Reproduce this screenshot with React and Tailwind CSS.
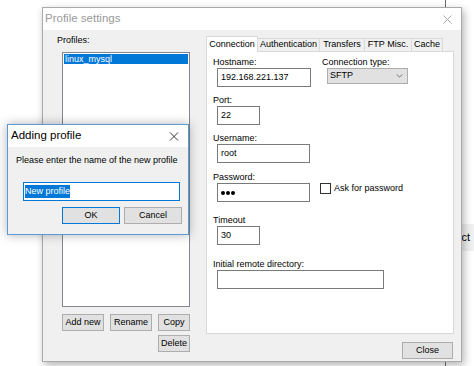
function CloseX({ className }) {
  return (
    <svg viewBox="0 0 10 10" className={className} fill="none" stroke="currentColor" strokeWidth="1">
      <path d="M0.5 0.5L9.5 9.5M9.5 0.5L0.5 9.5" />
    </svg>
  );
}

function Btn({ children, className = '' }) {
  return (
    <div className={`flex items-center justify-center h-[17px] bg-[#e1e1e1] border text-[9px] text-black ${className}`}>
      {children}
    </div>
  );
}

function Label({ children }) {
  return <div className="h-[11px] leading-[11px] text-[9px] text-black whitespace-nowrap">{children}</div>;
}

function TextBox({ width, children }) {
  return (
    <div className={`ml-[4px] h-[19px] ${width} border border-[#7a7a7a] bg-white flex items-center pl-[3px] text-[9px] text-black`}>
      {children}
    </div>
  );
}

const TABS = [
  { name: 'Authentication', w: 'w-[62px]' },
  { name: 'Transfers', w: 'w-[45px]' },
  { name: 'FTP Misc.', w: 'w-[47px]' },
  { name: 'Cache', w: 'w-[31px]' },
];

export default function App() {
  return (
    <div className="relative w-[474px] h-[366px] overflow-hidden bg-white font-['Liberation_Sans',Arial,sans-serif]">
      {/* window behind */}
      <div className="absolute left-[445px] top-0 w-[60px] h-[366px] border-l border-[#6b6b6b] bg-white">
        <div className="absolute left-[-20px] top-[224px] w-[80px] h-[27px] bg-[#f0f0f0] flex items-center pl-[3px] text-[11px] text-black">
          Connect
        </div>
      </div>

      {/* Profile settings */}
      <div className="absolute left-[42px] top-[7px] w-[420px] h-[355px] border border-[#aaaaaa] bg-[#f0f0f0] shadow-[2px_3px_8px_rgba(0,0,0,0.3)] flex flex-col">
        <div className="h-[22px] bg-white flex items-center justify-between pl-[2px] pr-[9px]">
          <span className="text-[11.5px] text-[#9a9a9a]">Profile settings</span>
          <CloseX className="w-[9px] h-[9px] text-[#a0a0a0]" />
        </div>

        <div className="flex-1 flex pl-[14px] pr-[6px]">
          <div className="w-[133px] pt-[4px]">
            <div className="h-[12px] leading-[12px] text-[9px] text-black">Profiles:</div>
            <div className="mt-[6px] ml-[5px] w-[128px] h-[255px] border border-[#828790] bg-white p-px">
              <div className="h-[10px] leading-[10px] bg-[#0078d7] text-white text-[9px] pl-[1px]">linux_mysql</div>
            </div>
            <div className="mt-[7px] ml-[5px] flex gap-[6px]">
              <Btn className="w-[42px] border-[#adadad]">Add new</Btn>
              <Btn className="w-[42px] border-[#adadad]">Rename</Btn>
              <Btn className="w-[32px] border-[#adadad]">Copy</Btn>
            </div>
            <div className="mt-[4px] flex justify-end">
              <Btn className="w-[32px] border-[#adadad]">Delete</Btn>
            </div>
          </div>

          <div className="ml-[16px] w-[248px] pt-[6px] flex flex-col">
            <div className="flex items-end h-[15px]">
              <div className="relative z-10 -mb-px h-[16px] w-[52px] bg-white border border-b-0 border-[#d9d9d9] flex items-center justify-center text-[9px] text-black">
                Connection
              </div>
              {TABS.map((t) => (
                <div
                  key={t.name}
                  className={`h-[13px] ${t.w} bg-[#f0f0f0] border-t border-r border-[#d9d9d9] flex items-center justify-center text-[9px] text-black`}
                >
                  {t.name}
                </div>
              ))}
            </div>

            <div className="h-[283px] bg-white border border-[#d9d9d9] pt-[5px] pl-[6px] flex flex-col">
              <div className="flex">
                <div className="w-[98px]">
                  <Label>Hostname:</Label>
                  <TextBox width="w-[94px]">192.168.221.137</TextBox>
                </div>
                <div className="ml-[11px]">
                  <Label>Connection type:</Label>
                  <div className="ml-[5px] w-[81px] h-[16px] bg-[#e1e1e1] border border-[#adadad] flex items-center justify-between pl-[2px] pr-[4px] text-[9px] text-black">
                    <span>SFTP</span>
                    <svg viewBox="0 0 8 5" className="w-[7px] h-[4px] text-[#555]" fill="none" stroke="currentColor" strokeWidth="1">
                      <path d="M0.5 0.5L4 4L7.5 0.5" />
                    </svg>
                  </div>
                </div>
              </div>

              <div className="mt-[8px]">
                <Label>Port:</Label>
                <TextBox width="w-[43px]">22</TextBox>
              </div>

              <div className="mt-[8px]">
                <Label>Username:</Label>
                <TextBox width="w-[93px]">root</TextBox>
              </div>

              <div className="mt-[9px]">
                <Label>Password:</Label>
                <div className="flex items-start">
                  <TextBox width="w-[93px]">
                    <div className="flex gap-[1px]">
                      <span className="w-[4px] h-[4px] rounded-full bg-black" />
                      <span className="w-[4px] h-[4px] rounded-full bg-black" />
                      <span className="w-[4px] h-[4px] rounded-full bg-black" />
                    </div>
                  </TextBox>
                  <div className="ml-[10px] flex items-center h-[11px]">
                    <div className="w-[11px] h-[11px] border border-[#333] bg-white" />
                    <span className="ml-[3px] text-[9px] text-black">Ask for password</span>
                  </div>
                </div>
              </div>

              <div className="mt-[13px]">
                <Label>Timeout</Label>
                <TextBox width="w-[43px]">30</TextBox>
              </div>

              <div className="mt-[14px]">
                <Label>Initial remote directory:</Label>
                <TextBox width="w-[167px]" />
              </div>
            </div>

            <div className="mt-[8px] flex justify-end pr-[1px]">
              <Btn className="w-[51px] border-[#adadad]">Close</Btn>
            </div>
          </div>
        </div>
      </div>

      {/* Adding profile */}
      <div className="absolute left-[7px] top-[124px] w-[182px] h-[111px] border border-[#5b9bd5] bg-[#f0f0f0] shadow-[0_0_10px_rgba(0,0,0,0.3)] flex flex-col">
        <div className="h-[22px] bg-white flex items-center justify-between pl-[3px] pr-[9px]">
          <span className="text-[11.5px] text-black">Adding profile</span>
          <CloseX className="w-[10px] h-[9px] text-[#222]" />
        </div>
        <div className="pl-[8px] pt-[8px]">
          <Label>Please enter the name of the new profile</Label>
          <div className="mt-[16px] ml-[7px] w-[157px] h-[19px] border border-[#0078d7] bg-white flex items-center pl-[1px]">
            <span className="h-[13px] leading-[13px] bg-[#0078d7] text-white text-[9px]">New profile</span>
          </div>
          <div className="mt-[6px] ml-[46px] flex gap-[4px]">
            <Btn className="w-[58px] border-[#0078d7]">OK</Btn>
            <Btn className="w-[58px] border-[#adadad]">Cancel</Btn>
          </div>
        </div>
      </div>
    </div>
  );
}
